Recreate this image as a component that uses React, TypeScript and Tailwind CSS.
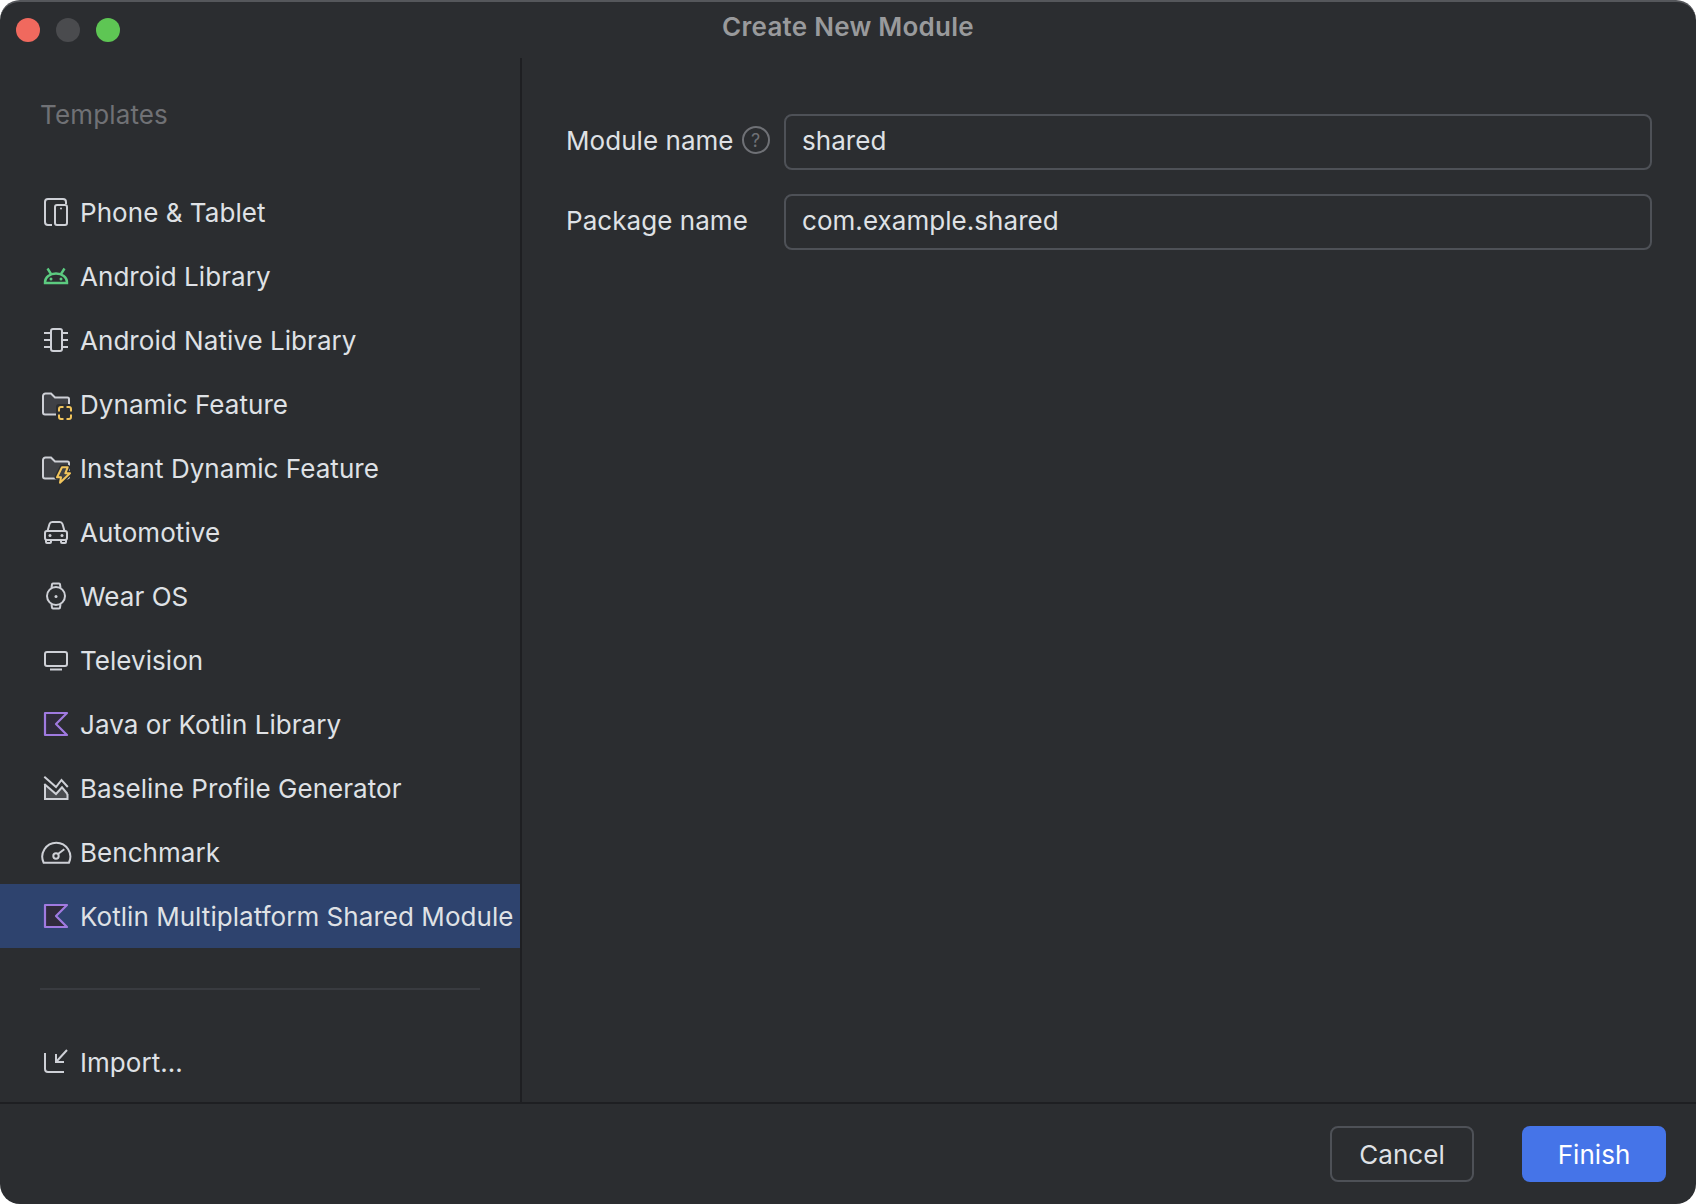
import type { ReactNode } from 'react'

const stroke = '#ced0d6'

const Icon = ({ children }: { children: ReactNode }) => (
  <svg width="32" height="32" viewBox="0 0 32 32" fill="none" stroke={stroke} strokeWidth="2" className="shrink-0">
    {children}
  </svg>
)

const PhoneIcon = () => (
  <Icon>
    <path d="M12 29H8a3 3 0 0 1-3-3V6a3 3 0 0 1 3-3h15a3 3 0 0 1 3 3v2" />
    <rect x="15" y="9" width="12" height="20" rx="2" />
    <circle cx="21" cy="12.5" r="1" fill={stroke} stroke="none" />
  </Icon>
)

const AndroidIcon = () => (
  <svg width="32" height="32" viewBox="0 0 32 32" fill="none" stroke="#5ccb80" strokeWidth="2.4" className="shrink-0">
    <path d="M5 23v-1a11 8.500 0 0 1 22 0v1z" />
    <path d="M7.500 8.500l3.500 5.500M24.500 8.500L21 14" />
    <circle cx="11" cy="19" r="1.500" fill="#5ccb80" stroke="none" />
    <circle cx="21" cy="19" r="1.500" fill="#5ccb80" stroke="none" />
  </svg>
)

const ChipIcon = () => (
  <Icon>
    <rect x="11" y="5" width="11" height="22" rx="2" />
    <path d="M4 9h7M4 16h7M4 23h7M22 9h6M22 16h6M22 23h6" />
  </Icon>
)

const Folder = () => (
  <path d="M3 8a2.500 2.500 0 0 1 2.500-2.500h5.500l4 4h12.500a1.500 1.500 0 0 1 1.500 1.500v13.500a2 2 0 0 1-2 2H5a2 2 0 0 1-2-2z" fill="#3f4146" />
)

const DynamicIcon = () => (
  <Icon>
    <Folder />
    <rect x="16" y="16" width="16" height="16" rx="3" fill="#2b2d30" stroke="none" />
    <path
      d="M19 23.500V21a2 2 0 0 1 2-2h2.500M26.500 19H29a2 2 0 0 1 2 2v2.500M31 26.500V29a2 2 0 0 1-2 2h-2.500M23.500 31H21a2 2 0 0 1-2-2v-2.500"
      stroke="#f2c55c"
    />
  </Icon>
)

const InstantIcon = () => (
  <Icon>
    <Folder />
    <path d="M22 15.300l-5 10h4l-1 5.400 10-9.400h-4.700l2.400-6z" fill="#2b2d30" stroke="#2b2d30" strokeWidth="5" strokeLinejoin="round" />
    <path d="M22 15.300l-5 10h4l-1 5.400 10-9.400h-4.700l2.400-6z" fill="#3f4146" stroke="#f2c55c" strokeLinejoin="round" />
  </Icon>
)

const CarIcon = () => (
  <Icon>
    <path d="M7.500 15l2-7a3 3 0 0 1 2.900-2h7.200a3 3 0 0 1 2.900 2l2 7" />
    <rect x="5" y="15" width="22" height="9" rx="2" />
    <path d="M6 24v2a1 1 0 0 0 1 1h3a1 1 0 0 0 1-1v-2M21 24v2a1 1 0 0 0 1 1h3a1 1 0 0 0 1-1v-2" />
    <circle cx="10" cy="19.500" r="1.500" fill={stroke} stroke="none" />
    <circle cx="22" cy="19.500" r="1.500" fill={stroke} stroke="none" />
  </Icon>
)

const WatchIcon = () => (
  <Icon>
    <circle cx="16" cy="16" r="9" />
    <path d="M11.500 8l.5-3.500a1 1 0 0 1 1-1h6a1 1 0 0 1 1 1l.5 3.500M11.500 24l.5 3.500a1 1 0 0 0 1 1h6a1 1 0 0 0 1-1l.5-3.500" />
    <circle cx="16" cy="16.500" r="1.500" fill={stroke} stroke="none" />
  </Icon>
)

const TvIcon = () => (
  <Icon>
    <rect x="5" y="8" width="22" height="14" rx="2" />
    <path d="M10 25.500h12" />
  </Icon>
)

const KotlinIcon = () => (
  <svg
    width="32"
    height="32"
    viewBox="0 0 32 32"
    fill="#302b3c"
    stroke="#a07ae0"
    strokeWidth="2.200"
    strokeLinejoin="round"
    className="shrink-0"
  >
    <path d="M5 5h22l-11 11 11 11H5z" />
  </svg>
)

const BaselineIcon = () => (
  <Icon>
    <path d="M5 12.500V27h22v-5l-5-6.700-6 6.700z" fill="#4a4c50" stroke="none" />
    <path d="M4.300 4.700L16 15l5.500-7 6.300 7" />
    <path d="M4.300 12L16 22l6-6.700 5.500 6.700" />
    <path d="M5 12v15h22.500v-5" />
  </Icon>
)

const GaugeIcon = () => (
  <Icon>
    <path d="M3.650 26.700A14 14 0 1 1 28.950 26.700z" />
    <circle cx="16" cy="20" r="2.700" />
    <path d="M18 18l6.300-4.700" />
  </Icon>
)

const ImportIcon = () => (
  <Icon>
    <path d="M5 7v16a3 3 0 0 0 3 3h16" />
    <path d="M27 4L16 16M16 8v8h8" />
  </Icon>
)

const templates = [
  { label: 'Phone & Tablet', icon: <PhoneIcon /> },
  { label: 'Android Library', icon: <AndroidIcon /> },
  { label: 'Android Native Library', icon: <ChipIcon /> },
  { label: 'Dynamic Feature', icon: <DynamicIcon /> },
  { label: 'Instant Dynamic Feature', icon: <InstantIcon /> },
  { label: 'Automotive', icon: <CarIcon /> },
  { label: 'Wear OS', icon: <WatchIcon /> },
  { label: 'Television', icon: <TvIcon /> },
  { label: 'Java or Kotlin Library', icon: <KotlinIcon /> },
  { label: 'Baseline Profile Generator', icon: <BaselineIcon /> },
  { label: 'Benchmark', icon: <GaugeIcon /> },
  { label: 'Kotlin Multiplatform Shared Module', icon: <KotlinIcon />, selected: true },
]

const App = () => {
  return (
    <div className="w-[1696px] h-[1204px] bg-white font-['Inter',sans-serif] text-[26px] tracking-[0.05px] text-[#dfe1e5]">
      <div className="flex flex-col h-full rounded-[20px] overflow-hidden bg-[#2b2d30] border-t-2 border-[#55575b]">
        {/* Title bar */}
        <div className="grid grid-cols-[1fr_auto_1fr] items-center h-[56px] px-4 shrink-0">
          <div className="flex gap-4">
            <span className="w-6 h-6 rounded-full bg-[#f0695e]" />
            <span className="w-6 h-6 rounded-full bg-[#4a4b4e]" />
            <span className="w-6 h-6 rounded-full bg-[#5ec654]" />
          </div>
          <span className="pb-[8px] font-semibold tracking-[0.25px] text-[#999a9c]">Create New Module</span>
          <div />
        </div>

        <div className="flex flex-1 min-h-0">
          {/* Sidebar */}
          <aside className="flex flex-col w-[522px] shrink-0 border-r-2 border-[#1e1f22]">
            <div className="pl-10 h-[122px] pt-[39px] tracking-[0.15px] text-[#707175] leading-[36px]">Templates</div>
            <div className="flex flex-col">
              {templates.map(({ label, icon, selected }) => (
                <div
                  key={label}
                  className={`flex items-center gap-2 h-16 pl-10 whitespace-nowrap ${selected ? 'bg-[#2e436e]' : ''}`}
                >
                  {icon}
                  {label}
                </div>
              ))}
            </div>
            <div className="mx-10 mt-[40px] h-[2px] bg-[#393b40] w-[440px]" />
            <div className="flex items-center gap-2 h-16 pl-10 mt-[40px]">
              <ImportIcon />
              Import...
            </div>
          </aside>

          {/* Form */}
          <main className="flex-1 px-[44px] pt-[56px] flex flex-col gap-[24px]">
            <div className="flex items-center h-[56px]">
              <div className="flex items-center w-[218px] shrink-0 pb-1">
                <span>Module name</span>
                <span className="ml-[8px] flex items-center justify-center w-7 h-7 rounded-full border-2 border-[#6f7176] text-[#6f7176] text-[18px]">
                  ?
                </span>
              </div>
              <div className="flex-1 flex items-center h-full rounded-[8px] border-2 border-[#4e5157] px-4 pb-1">shared</div>
            </div>
            <div className="flex items-center h-[56px]">
              <div className="w-[218px] shrink-0 pb-1">Package name</div>
              <div className="flex-1 flex items-center h-full rounded-[8px] border-2 border-[#4e5157] px-4 pb-1">
                com.example.shared
              </div>
            </div>
          </main>
        </div>

        {/* Footer */}
        <div className="flex justify-end items-start gap-12 h-[102px] shrink-0 border-t-2 border-[#1e1f22] pt-[22px] pr-[30px]">
          <button className="w-[144px] h-[56px] rounded-[8px] border-2 border-[#4e5157]">Cancel</button>
          <button className="w-[144px] h-[56px] rounded-[8px] bg-[#4574e8] text-white">Finish</button>
        </div>
      </div>
    </div>
  )
}

export default App
